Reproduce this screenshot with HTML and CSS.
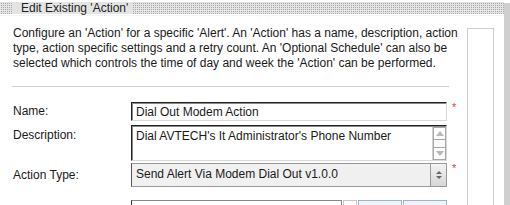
FILE: index.html
```html
<!DOCTYPE html>
<html lang="en">
<head>
    <meta charset="UTF-8">
    <title>Edit Existing 'Action'</title>
    <link rel="stylesheet" href="styles.css">
</head>
<body>
    <div class="window">
        <div class="main">
            <div class="titlebar">
                <span class="title">Edit Existing 'Action'</span>
            </div>

            <div class="body">
                <div class="content">
                    <p class="intro">Configure an 'Action' for a specific 'Alert'. An 'Action' has a name, description, action type, action specific settings and a retry count. An 'Optional Schedule' can also be selected which controls the time of day and week the 'Action' can be performed.</p>

                    <div class="sep"></div>

                    <div class="form">
                        <div class="label label-mid">Name:</div>
                        <div class="input">Dial Out Modem Action</div>
                        <div class="req">*</div>

                        <div class="label label-top">Description:</div>
                        <div class="textarea">
                            <div class="textarea-text">Dial AVTECH's It Administrator's Phone Number</div>
                            <div class="vscroll">
                                <div class="sbtn"><span class="tri-up"></span></div>
                                <div class="strack"></div>
                                <div class="sbtn"><span class="tri-down"></span></div>
                            </div>
                        </div>
                        <div></div>

                        <div class="label label-mid">Action Type:</div>
                        <div class="select">
                            <div class="select-text">Send Alert Via Modem Dial Out v1.0.0</div>
                            <div class="spinner">
                                <span class="tri-up small"></span>
                                <span class="tri-down small"></span>
                            </div>
                        </div>
                        <div class="req">*</div>

                        <div class="label"></div>
                        <div class="retry-row">
                            <div class="retry-input"></div>
                            <div class="retry-small"></div>
                            <div class="retry-btn"></div>
                            <div class="retry-btn"></div>
                        </div>
                        <div></div>
                    </div>
                </div>

                <div class="side-box"></div>
            </div>
        </div>
        <div class="gutter"></div>
    </div>
</body>
</html>
```

FILE: styles.css
```css
html, body {
    margin: 0;
    padding: 0;
    background: #fff;
    overflow: hidden;
}

body {
    font-family: "Liberation Sans", Arial, sans-serif;
    font-size: 12px;
    color: #1a1a1a;
    width: 510px;
    height: 205px;
}

.window {
    display: flex;
    height: 205px;
}

.main {
    flex: 1;
    display: flex;
    flex-direction: column;
}

/* Title bar with dotted fill */
.titlebar {
    height: 12px;
    padding: 2px 0 1px;
    border-bottom: 1px solid #f4f4f4;
    background-color: #e4e4e4;
    background-image:
        linear-gradient(90deg, #e4e4e4 1px, transparent 1px),
        linear-gradient(#e4e4e4 1px, #a8a8a8 1px);
    background-size: 2px 2px;
    background-clip: content-box;
    display: flex;
    align-items: center;
}

.title {
    margin-left: 13px;
    padding: 0 5px 0 8px;
    height: 12px;
    line-height: 12px;
    background: #e4e4e4;
    color: #222;
    font-size: 12px;
}

.body {
    flex: 1;
    display: flex;
    min-height: 0;
}

.content {
    width: 448px;
    padding: 10px 0 0 13px;
}

.intro {
    margin: 0;
    line-height: 15px;
    width: 450px;
}

.sep {
    height: 1px;
    background: #cfcfcf;
    margin: 15px 0 15px -1px;
    width: 437px;
}

/* Form */
.form {
    display: grid;
    grid-template-columns: 118px 316px 14px;
    grid-template-rows: 19px 36px 22px 20px;
    row-gap: 4px;
}

.form > :nth-child(n+7) {
    margin-top: -2px;
}

.form > :nth-child(n+10) {
    margin-top: 9px;
}

.label {
    line-height: 15px;
}

.label-mid {
    align-self: center;
}

.label-top {
    padding-top: 3px;
}

.input {
    border: 1px solid;
    border-color: #222 #d8d8d8 #d8d8d8 #222;
    box-shadow: inset 1px 1px 0 #888;
    padding: 2px 4px;
    line-height: 14px;
}

.req {
    color: #e03c3c;
    font-size: 11px;
    padding-left: 5px;
    line-height: 10px;
}

.textarea {
    display: flex;
    border: 1px solid;
    border-color: #222 #d8d8d8 #d8d8d8 #222;
    box-shadow: inset 1px 1px 0 #888;
}

.textarea-text {
    flex: 1;
    padding: 3px 4px;
    line-height: 14px;
}

.vscroll {
    width: 13px;
    display: flex;
    flex-direction: column;
    margin: 1px 0 0;
    border-left: 1px solid #d0d0d0;
    background: #fafafa;
}

.sbtn {
    height: 11px;
    border: 1px solid #a8a8a8;
    background: #fdfdfd;
    display: flex;
    align-items: center;
    justify-content: center;
}

.strack {
    flex: 1;
    border-left: 1px solid #a8a8a8;
    border-right: 1px solid #a8a8a8;
}

.tri-up, .tri-down {
    width: 0;
    height: 0;
    border-left: 4px solid transparent;
    border-right: 4px solid transparent;
}

.tri-up {
    border-bottom: 5px solid #b8b8b8;
}

.tri-down {
    border-top: 5px solid #b8b8b8;
}

.tri-up.small {
    border-width: 0 3px 3px;
    border-bottom-color: #666;
}

.tri-down.small {
    border-width: 3px 3px 0;
    border-top-color: #666;
}

.select {
    display: flex;
    border: 1px solid #9a9a9a;
    border-left-color: #555;
    background: #f0f0f0;
}

.select-text {
    flex: 1;
    padding: 0 4px;
    line-height: 20px;
}

.spinner {
    width: 15px;
    border-left: 1px solid #9a9a9a;
    background: linear-gradient(#f4f4f4, #d6d6d6);
    display: flex;
    flex-direction: column;
    align-items: center;
    justify-content: center;
    gap: 2px;
}

.retry-row {
    display: flex;
    gap: 1px;
    height: 20px;
}

.retry-input {
    width: 209px;
    border: 1px solid #888;
    border-left-color: #333;
}

.retry-small {
    width: 12px;
    border: 1px solid #c8c8c8;
}

.retry-btn {
    flex: 1;
    border: 1px solid #9cb4cc;
    background: #eef4fa;
}

.side-box {
    width: 25px;
    margin: 12px 0 0 6px;
    border: 1px solid #cdcdcd;
    border-bottom: none;
}

.gutter {
    width: 6px;
    margin-top: 3px;
    background: #cfcfcf;
}
```
